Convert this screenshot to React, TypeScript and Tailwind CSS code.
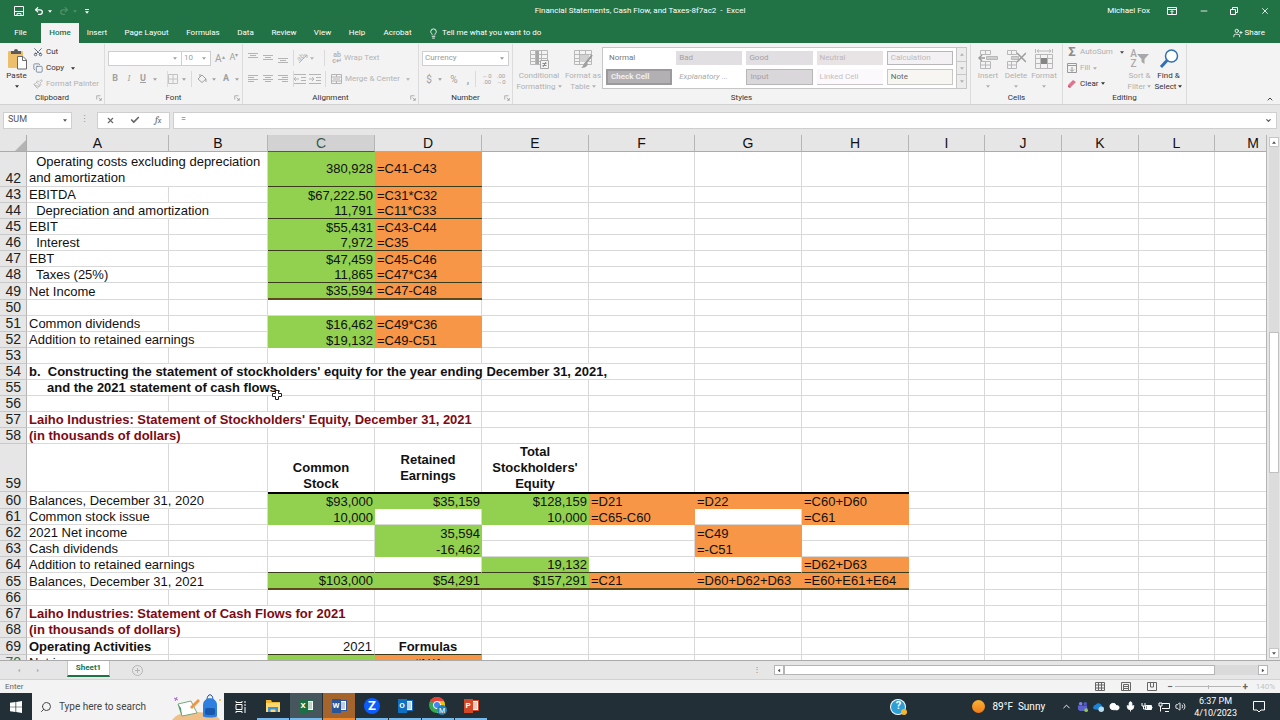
import type { ReactNode } from 'react';
import { ChevronUp, ChevronDown, Minus, X, Lightbulb, Undo2, Redo2, Search, Check, UserPlus, Copy, Paintbrush, Scissors, Volume2, Mic, Cloud } from 'lucide-react';

type Cell = { t: string; fill?: 'g' | 'o'; align?: 'l' | 'c' | 'r'; v?: string; bold?: boolean; edge?: 'line' | 'total' | 'head' | 'none' };
type Row = { n: number; h: string; label?: string; span?: number; style?: string; cells?: Record<string, Cell> };

const columns = [
  { id: 'A', w: 'w-[142px]' },
  { id: 'B', w: 'w-[99px]' },
  { id: 'C', w: 'w-[107px]' },
  { id: 'D', w: 'w-[107px]' },
  { id: 'E', w: 'w-[107px]' },
  { id: 'F', w: 'w-[106px]' },
  { id: 'G', w: 'w-[107px]' },
  { id: 'H', w: 'w-[107px]' },
  { id: 'I', w: 'w-[76px]' },
  { id: 'J', w: 'w-[77px]' },
  { id: 'K', w: 'w-[77px]' },
  { id: 'L', w: 'w-[76px]' },
  { id: 'M', w: 'w-[77px]' },
];

const num = (t: string, edge?: Cell['edge']): Cell => ({ t, fill: 'g', align: 'r', edge });
const fx = (t: string, edge?: Cell['edge']): Cell => ({ t, fill: 'o', edge });
const blank = (edge: Cell['edge']): Cell => ({ t: '', edge });
const head = (t: string, v = 'align-bottom'): Cell => ({ t, align: 'c', bold: true, v, edge: 'none' });

const RED = 'font-bold text-[#7d0a12]';

const rows: Row[] = [
  { n: 42, h: 'h-[35px] leading-4', label: '  Operating costs excluding depreciation\nand amortization', span: 2, cells: { C: num('380,928', 'line'), D: fx('=C41-C43', 'line') } },
  { n: 43, h: 'h-4', label: 'EBITDA', cells: { C: num('$67,222.50'), D: fx('=C31*C32') } },
  { n: 44, h: 'h-4', label: '  Depreciation and amortization', span: 2, cells: { C: num('11,791', 'line'), D: fx('=C11*C33', 'line') } },
  { n: 45, h: 'h-4', label: 'EBIT', cells: { C: num('$55,431'), D: fx('=C43-C44') } },
  { n: 46, h: 'h-4', label: '  Interest', cells: { C: num('7,972', 'line'), D: fx('=C35', 'line') } },
  { n: 47, h: 'h-4', label: 'EBT', cells: { C: num('$47,459'), D: fx('=C45-C46') } },
  { n: 48, h: 'h-4', label: '  Taxes (25%)', cells: { C: num('11,865', 'line'), D: fx('=C47*C34', 'line') } },
  { n: 49, h: 'h-[17px]', label: 'Net Income', cells: { C: num('$35,594', 'total'), D: fx('=C47-C48', 'total') } },
  { n: 50, h: 'h-4' },
  { n: 51, h: 'h-4', label: 'Common dividends', cells: { C: num('$16,462'), D: fx('=C49*C36') } },
  { n: 52, h: 'h-4', label: 'Addition to retained earnings', span: 2, cells: { C: num('$19,132'), D: fx('=C49-C51') } },
  { n: 53, h: 'h-4' },
  { n: 54, h: 'h-4', label: "b.  Constructing the statement of stockholders' equity for the year ending December 31, 2021,", span: 6, style: 'font-bold' },
  { n: 55, h: 'h-4', label: '     and the 2021 statement of cash flows.', span: 3, style: 'font-bold' },
  { n: 56, h: 'h-4' },
  { n: 57, h: 'h-4', label: "Laiho Industries: Statement of Stockholders' Equity, December 31, 2021", span: 4, style: RED },
  { n: 58, h: 'h-4', label: '(in thousands of dollars)', span: 2, style: RED },
  { n: 59, h: 'h-12 leading-4', cells: { C: head('Common\nStock'), D: head('Retained\nEarnings', 'align-middle'), E: head("Total\nStockholders'\nEquity"), F: blank('none'), G: blank('none'), H: blank('none') } },
  { n: 60, h: 'h-[17px]', label: 'Balances, December 31, 2020', span: 2, cells: { C: num('$93,000', 'head'), D: num('$35,159', 'head'), E: num('$128,159', 'head'), F: fx('=D21', 'head'), G: fx('=D22', 'head'), H: fx('=C60+D60', 'head') } },
  { n: 61, h: 'h-4', label: 'Common stock issue', cells: { C: num('10,000'), E: num('10,000'), F: fx('=C65-C60'), H: fx('=C61') } },
  { n: 62, h: 'h-4', label: '2021 Net income', cells: { D: num('35,594'), G: fx('=C49') } },
  { n: 63, h: 'h-4', label: 'Cash dividends', cells: { D: num('-16,462'), G: fx('=-C51') } },
  { n: 64, h: 'h-4', label: 'Addition to retained earnings', span: 2, cells: { C: blank('line'), D: blank('line'), E: num('19,132', 'line'), F: blank('line'), G: blank('line'), H: fx('=D62+D63', 'line') } },
  { n: 65, h: 'h-[17px]', label: 'Balances, December 31, 2021', span: 2, cells: { C: num('$103,000', 'total'), D: num('$54,291', 'total'), E: num('$157,291', 'total'), F: fx('=C21', 'total'), G: fx('=D60+D62+D63', 'total'), H: fx('=E60+E61+E64', 'total') } },
  { n: 66, h: 'h-4' },
  { n: 67, h: 'h-4', label: 'Laiho Industries: Statement of Cash Flows for 2021', span: 3, style: RED },
  { n: 68, h: 'h-4', label: '(in thousands of dollars)', span: 2, style: RED },
  { n: 69, h: 'h-[17px]', label: 'Operating Activities', style: 'font-bold', cells: { C: { t: '2021', align: 'r', edge: 'line' }, D: { t: 'Formulas', align: 'c', bold: true, edge: 'line' } } },
  { n: 70, h: 'h-4', label: 'Net income', cells: { C: num(''), D: { t: '#N/A', fill: 'o', align: 'c' } } },
];

function cellClass(c?: Cell) {
  const fill = c?.fill === 'g' ? 'bg-[#92d050]' : c?.fill === 'o' ? 'bg-[#f79646]' : 'border-r border-r-[#d9d9d9]';
  const align = c?.align === 'r' ? 'text-right' : c?.align === 'c' ? 'text-center' : 'text-left';
  let edge = c?.fill ? '' : 'border-b border-b-[#d9d9d9]';
  if (c?.edge === 'none') edge = '';
  if (c?.edge === 'line') edge = 'border-b border-b-[#3a3a1c]';
  if (c?.edge === 'total') edge = 'border-b-2 border-b-[#5c4a1c]';
  if (c?.edge === 'head') edge = 'border-t-2 border-t-black';
  return `${fill} ${align} ${edge} ${c?.bold ? 'font-bold' : ''} ${c?.v ?? 'align-middle'} px-[2px] whitespace-pre`;
}

function SheetRow({ row }: { row: Row }) {
  const span = row.span ?? 1;
  return (
    <tr className={row.h}>
      <th scope="row" className={`border-r border-b border-r-[#b5b5b5] border-b-[#c9c9c9] bg-[#e6e6e6] pr-[5px] text-right align-bottom text-sm leading-[15px] font-normal ${row.n === 70 ? 'text-[#217346]' : 'text-[#222]'}`}>
        {row.n}
      </th>
      <td colSpan={span} className={`border-r border-b border-[#d9d9d9] pl-[2px] text-left align-bottom whitespace-pre ${row.style ?? ''}`}>
        {row.label}
      </td>
      {columns.slice(span).map(col => (
        <td key={col.id} className={cellClass(row.cells?.[col.id])}>{row.cells?.[col.id]?.t}</td>
      ))}
      <td className="border-b border-[#d9d9d9]" />
    </tr>
  );
}

function Caret({ className = '' }: { className?: string }) {
  return (
    <svg viewBox="0 0 6 4" className={`h-[3px] w-[4px] shrink-0 ${className}`} fill="currentColor">
      <path d="M0 0h6L3 4z" />
    </svg>
  );
}

function Group({ label, width, launcher, children }: { label: string; width: string; launcher?: boolean; children: ReactNode }) {
  return (
    <section className={`flex shrink-0 flex-col border-r border-[#dcdcdc] ${width}`}>
      <div className="flex min-h-0 flex-1 items-start">{children}</div>
      <div className="relative h-3 text-center text-[8px] leading-3 text-[#333]">
        {label}
        {launcher && (
          <button aria-label={`${label} settings`} className="absolute top-[3px] right-[2px] text-[#999]">
            <svg viewBox="0 0 8 8" className="size-[6px]" fill="none" stroke="currentColor">
              <path d="M1 6V1h5M3.500 3.500 7 7M7 4v3H4" />
            </svg>
          </button>
        )}
      </div>
    </section>
  );
}

function Divider() {
  return <span className="h-4 w-px bg-[#dadada]" />;
}

// Horizontal strokes for the six alignment buttons
function LinesIcon({ lines }: { lines: [number, number, number][] }) {
  return (
    <svg viewBox="0 0 10 10" className="size-[10px]" stroke="currentColor">
      {lines.map(([x1, x2, y]) => (
        <path key={y} d={`M${x1} ${y}H${x2}`} />
      ))}
    </svg>
  );
}

const verticalAligns: { name: string; lines: [number, number, number][] }[] = [
  { name: 'Top align', lines: [[0, 10, 0.5], [2, 8, 2.5], [0, 10, 4.5]] },
  { name: 'Middle align', lines: [[0, 10, 2.5], [2, 8, 4.5], [0, 10, 6.5]] },
  { name: 'Bottom align', lines: [[0, 10, 5.5], [2, 8, 7.5], [0, 10, 9.5]] },
];
const textAligns: { name: string; lines: [number, number, number][] }[] = [
  { name: 'Align left', lines: [[0, 10, 1.5], [0, 6, 3.5], [0, 10, 5.5], [0, 6, 7.5]] },
  { name: 'Center', lines: [[0, 10, 1.5], [2, 8, 3.5], [0, 10, 5.5], [2, 8, 7.5]] },
  { name: 'Align right', lines: [[0, 10, 1.5], [4, 10, 3.5], [0, 10, 5.5], [4, 10, 7.5]] },
];

function IndentIcon({ flip }: { flip?: boolean }) {
  return (
    <svg viewBox="0 0 12 10" className="h-[10px] w-3" fill="none" stroke="currentColor">
      <path d="M0 .5h12M7 3.500h5M7 6.500h5M0 9.500h12" />
      <path d={flip ? 'M0 5h5M3 3l2 2-2 2' : 'M0 5h5M2 3 0 5l2 2'} />
    </svg>
  );
}

function PasteIcon() {
  return (
    <svg viewBox="0 0 20 22" className="h-[22px] w-5">
      <rect x="1" y="3" width="15" height="17" rx="1" fill="#edbf6d" />
      <path d="M4 6V3h3a2 2 0 0 1 4 0h3v3z" fill="#5b5b5b" />
      <path d="M10.500 8.500h5.500l3.500 3.500v9h-9z" fill="#fff" stroke="#6b6b6b" />
      <path d="M15.500 8.500v4h4" fill="none" stroke="#6b6b6b" />
    </svg>
  );
}

function GridGlyph({ mark }: { mark: 'cond' | 'table' | 'insert' | 'delete' | 'format' }) {
  return (
    <svg viewBox="0 0 20 20" className="size-5" fill="none" stroke="#b8b8b8">
      {(mark === 'cond' || mark === 'table') && <path d="M1.500 1.500h17v14h-17zM1.500 5.500h17M1.500 9.500h17M1.500 12.500h17M6.500 1.500v14M12.500 1.500v14" />}
      {mark === 'cond' && (
        <>
          <path d="M7 2h3v13H7z" fill="#a8a8a8" stroke="none" />
          <path d="M11.500 11.500h8v8h-8z" fill="#f3f3f3" stroke="#a5a5a5" />
          <path d="M13.500 14.500h4M13.500 16.500h4M17 13l-3 5" stroke="#8a8a8a" />
        </>
      )}
      {mark === 'table' && (
        <>
          <path d="M7 6h9v7H7z" fill="#d0d0d0" stroke="none" />
          <path d="M19 6l-6 8" stroke="#9a9a9a" strokeWidth="2" />
          <path d="M13 13l2 2c-1 3-4 4-7 4 3-2 2-5 5-6z" fill="#a0a0a0" stroke="none" />
        </>
      )}
      {mark === 'insert' && (
        <>
          <path d="M2.500 1.500h10v4h-10zM7.500 1.500v4M2.500 12.500h10v7h-10zM2.500 16h10M7.500 12.500v7" />
          <path d="M8.500 7.500h11v3h-11z" fill="#cfcfcf" />
          <path d="M1 9h6M4 6 1 9l3 3" stroke="#9c9c9c" strokeWidth="1.500" />
        </>
      )}
      {mark === 'delete' && (
        <>
          <path d="M1.500 1.500h9v4h-9zM5.500 1.500v4M1.500 12.500h9v7h-9zM1.500 16h9M5.500 12.500v7" />
          <path d="M5.500 7.500h7v3h-7z" fill="#cfcfcf" />
          <path d="M11 4l9 9M20 4l-9 9" stroke="#9c9c9c" strokeWidth="1.500" />
        </>
      )}
      {mark === 'format' && (
        <>
          <path d="M1.500 5.500h17v14h-17zM1.500 9.500h17M1.500 14.500h17M6.500 5.500v14M13.500 5.500v14M1.500 0v4M18.500 0v4M3 2h14M5 .5 3 2l2 1.500M15 .5l2 1.500-2 1.500" />
          <path d="M7 9h6v6H7z" fill="#858585" stroke="none" />
        </>
      )}
    </svg>
  );
}

function TallButton({ icon, lines, width, active, caretBelow }: { icon: ReactNode; lines: string[]; width: string; active?: boolean; caretBelow?: boolean }) {
  return (
    <button className={`flex shrink-0 flex-col items-center pt-1 text-[8px] leading-[11px] ${width} ${active ? 'text-[#333]' : 'text-[#b1b1b1]'}`}>
      <span className="flex h-[22px] items-center justify-center">{icon}</span>
      {lines.map((line, i) => (
        <span key={line} className="flex items-center gap-[2px] whitespace-nowrap">
          {line}
          {!caretBelow && i === lines.length - 1 && <Caret />}
        </span>
      ))}
      {caretBelow && <Caret className="mt-1" />}
    </button>
  );
}

const cellStyles = [
  { name: 'Normal', look: 'bg-white text-[#777]' },
  { name: 'Bad', look: 'bg-[#e2dfe2] text-[#a5a0a5]' },
  { name: 'Good', look: 'bg-[#e2dfe2] text-[#a5a0a5]' },
  { name: 'Neutral', look: 'bg-[#e8e4e6] text-[#bdb6ba]' },
  { name: 'Calculation', look: 'border border-[#b9b6b9] bg-[#f3f1f3] text-[#bdb9bd]' },
  { name: 'Check Cell', look: 'border-2 border-[#9c999c] bg-[#b3b0b3] font-bold text-[#efefef]' },
  { name: 'Explanatory ...', look: 'bg-white text-[#aaa] italic' },
  { name: 'Input', look: 'border border-[#b9b6b9] bg-[#dad7da] text-[#a5a0a5]' },
  { name: 'Linked Cell', look: 'border-b border-[#c9c5c9] bg-[#fbf9fb] text-[#c4c0c4]' },
  { name: 'Note', look: 'border border-[#c9c7c4] bg-[#f8f6f3] text-[#666]' },
];

const menuTabs = [
  { name: 'Insert', w: 'w-9' },
  { name: 'Page Layout', w: 'w-[63px]' },
  { name: 'Formulas', w: 'w-[50px]' },
  { name: 'Data', w: 'w-[35px]' },
  { name: 'Review', w: 'w-[42px]' },
  { name: 'View', w: 'w-[35px]' },
  { name: 'Help', w: 'w-[34px]' },
  { name: 'Acrobat', w: 'w-[47px]' },
];

function TitleBar() {
  return (
    <header className="bg-[#217346] text-[8px] text-white">
      <div className="grid h-[22px] grid-cols-[1fr_auto_1fr] items-center">
        <div className="flex items-center pl-[14px]">
          <button aria-label="Save">
            <svg viewBox="0 0 10 10" className="size-[10px]" fill="none" stroke="currentColor">
              <path d="M.5.5h9v9h-9zM.5 5.500h9M3 9.500v-2h4v2" />
            </svg>
          </button>
          <button aria-label="Undo" className="ml-[10px]"><Undo2 className="size-[10px]" strokeWidth={3} /></button>
          <Caret className="ml-1" />
          <button aria-label="Redo" className="ml-[7px] text-[#4f9169]"><Redo2 className="size-[10px]" strokeWidth={3} /></button>
          <Caret className="ml-1 text-[#4f9169]" />
          <button aria-label="Customize toolbar" className="ml-2 flex flex-col items-center gap-px">
            <span className="h-px w-1 bg-white" />
            <Caret />
          </button>
        </div>
        <h1>Financial Statements, Cash Flow, and Taxes-8f7ac2 &nbsp;- &nbsp;Excel</h1>
        <div className="flex items-center justify-end pr-[10px]">
          <span className="mr-[17px]">Michael Fox</span>
          <button aria-label="Ribbon display options">
            <svg viewBox="0 0 10 8" className="mr-[22px] h-2 w-[10px]" fill="none" stroke="currentColor">
              <path d="M.5.5h9v7h-9zM.5 2.500h9M5 7V4M3.500 5 5 3.500 6.500 5" />
            </svg>
          </button>
          <button aria-label="Minimize"><Minus className="mr-[21px] size-[10px]" /></button>
          <button aria-label="Restore">
            <svg viewBox="0 0 8 8" className="mr-[22px] size-2" fill="none" stroke="currentColor">
              <path d="M.5 2.500h5v5h-5zM2.500 2.500v-2h5v5h-2" />
            </svg>
          </button>
          <button aria-label="Close"><X className="size-[10px]" /></button>
        </div>
      </div>
      <nav className="flex h-[21px] items-stretch pt-px">
        <button className="w-[41px]">File</button>
        <button className="w-[38px] bg-[#f3f3f3] font-medium text-[#217346]">Home</button>
        {menuTabs.map(tab => (
          <button key={tab.name} className={`whitespace-nowrap ${tab.w}`}>{tab.name}</button>
        ))}
        <label className="ml-[7px] flex items-center gap-[3px]">
          <Lightbulb className="size-[11px]" />
          <input readOnly value="Tell me what you want to do" className="w-[130px] outline-none" />
        </label>
        <button className="mr-[15px] ml-auto flex items-center gap-[2px]"><UserPlus className="size-[10px]" />Share</button>
      </nav>
    </header>
  );
}

function Ribbon() {
  return (
    <div className="flex h-[62px] shrink-0 border-b border-[#d2d2d2] bg-[#f3f3f3] pt-px text-[8px] text-[#b1b1b1]">
      <Group label="Clipboard" width="w-[105px]" launcher>
        <TallButton icon={<PasteIcon />} lines={['Paste']} width="w-[33px]" active caretBelow />
        <div className="flex flex-col text-[#333]">
          <button className="flex h-4 items-center gap-[3px]"><Scissors className="size-[10px] -rotate-90 text-[#44546a]" />Cut</button>
          <button className="flex h-4 items-center gap-[3px]"><Copy className="size-[10px] text-[#6b7f96]" />Copy <Caret className="ml-1" /></button>
          <button className="flex h-[15px] items-center gap-[3px] whitespace-nowrap text-[#b1b1b1]"><Paintbrush className="size-[10px]" />Format Painter</button>
        </div>
      </Group>
      <Group label="Font" width="w-[138px]" launcher>
        <div className="flex flex-col pl-[3px]">
          <div className="flex h-[28px] items-center text-[#a0a0a0]">
            <label className="flex h-[15px] w-[74px] items-center border border-[#cfcfcf] bg-white pr-1">
              <select aria-label="Font name" className="w-full appearance-none outline-none"><option></option></select>
              <Caret />
            </label>
            <label className="flex h-[15px] w-[29px] items-center border border-l-0 border-[#cfcfcf] bg-white pr-1 pl-[2px]">
              <select aria-label="Font size" className="w-full appearance-none outline-none"><option>10</option></select>
              <Caret />
            </label>
            <button className="ml-1 text-[10px]">A<sup className="text-[6px]">▴</sup></button>
            <button className="ml-[5px] text-[9px]">A<sup className="text-[6px]">▾</sup></button>
          </div>
          <div className="flex h-[14px] items-center text-[9px] text-[#a0a0a0]">
            <button className="w-[14px] font-bold">B</button>
            <button className="w-[14px] font-serif italic">I</button>
            <button className="w-[14px] font-bold underline">U</button>
            <Caret className="mr-[10px] ml-[3px]" />
            <Divider />
            <svg viewBox="0 0 10 10" className="mr-1 size-[10px]" fill="none" stroke="#c2c2c2"><path d="M.5.5h9v9h-9zM5 0v10M0 5h10" /></svg>
            <Caret className="mr-[5px]" />
            <Divider />
            <svg viewBox="0 0 10 10" className="mr-[5px] ml-[5px] size-[10px]" fill="none" stroke="currentColor"><path d="M1 5l4-4 4 4-4 3.500zM3 3V0M9 5v3" /></svg>
            <Caret className="mr-[7px]" />
            <button className="mr-[6px] font-bold">A</button>
            <Caret />
          </div>
        </div>
      </Group>
      <Group label="Alignment" width="w-[176px]" launcher>
        <div className="flex w-full flex-col pl-[5px] text-[#b4b4b4]">
          <div className="flex h-[28px] items-center">
            <div className="flex gap-[5px]">
              {verticalAligns.map(a => <button key={a.name} aria-label={a.name}><LinesIcon lines={a.lines} /></button>)}
            </div>
            <span className="w-[5px]" /><Divider />
            <button aria-label="Orientation" className="ml-[2px]">
              <svg viewBox="0 0 12 12" className="size-3 overflow-visible" fill="none" stroke="currentColor">
                <path d="M3 11 11 3M8 3h3v3" />
                <text x="1" y="8" fontSize="7" fill="currentColor" stroke="none" transform="rotate(-40 4 6)">ab</text>
              </svg>
            </button>
            <Caret className="mr-[10px] ml-[2px]" /><Divider />
            <button className="ml-[7px] flex items-center gap-[2px]">
              <span className="w-[10px] text-[7px] leading-[6px] font-bold">ab c↵</span>Wrap Text
            </button>
          </div>
          <div className="flex h-[14px] items-center">
            <div className="flex gap-[5px]">
              {textAligns.map(a => <button key={a.name} aria-label={a.name}><LinesIcon lines={a.lines} /></button>)}
            </div>
            <span className="w-[5px]" /><Divider />
            <button aria-label="Decrease indent"><IndentIcon /></button>
            <button aria-label="Increase indent" className="mr-1 ml-[3px]"><IndentIcon flip /></button>
            <Divider />
            <button className="ml-[5px] flex items-center gap-[3px] whitespace-nowrap">
              <svg viewBox="0 0 11 10" className="h-[10px] w-[11px]" fill="none" stroke="currentColor"><path d="M.5.5h10v9H.5zM.5 3h10M.5 7h10M5.500 0v3M5.500 7v3M2 5h7" /></svg>
              Merge &amp; Center
            </button>
            <Caret className="ml-[6px]" />
          </div>
        </div>
      </Group>
      <Group label="Number" width="w-[94px]" launcher>
        <div className="flex w-full flex-col pl-[3px]">
          <div className="flex h-[28px] items-center">
            <label className="flex h-[15px] w-[87px] items-center border border-[#cfcfcf] bg-white pr-1 pl-[2px] text-[#999]">
              <select aria-label="Number format" className="w-full appearance-none outline-none"><option>Currency</option></select>
              <Caret />
            </label>
          </div>
          <div className="flex h-[14px] items-center text-[10px] text-[#a0a0a0]">
            <button className="w-[14px]">$</button>
            <Caret className="mr-[5px] ml-[2px]" />
            <button className="w-[14px]">%</button>
            <button className="w-[14px] font-bold">,</button>
            <Divider />
            <button className="ml-1 w-[14px] text-[6px] leading-[6px]">←0 .00</button>
            <button className="w-[14px] text-[6px] leading-[6px]">.00 →0</button>
          </div>
        </div>
      </Group>
      <Group label="Styles" width="w-[458px]">
        <TallButton icon={<GridGlyph mark="cond" />} lines={['Conditional', 'Formatting']} width="w-[52px]" />
        <TallButton icon={<GridGlyph mark="table" />} lines={['Format as', 'Table']} width="w-[36px]" />
        <div className="mt-[3px] ml-px flex h-[42px] w-[365px] border border-[#c6c6c6] bg-white">
          <div className="grid flex-1 grid-cols-5 gap-x-1 gap-y-1 p-[3px]">
            {cellStyles.map(s => (
              <button key={s.name} className={`flex items-center overflow-hidden px-[3px] text-left whitespace-nowrap ${s.look}`}>{s.name}</button>
            ))}
          </div>
          <div className="flex w-[10px] flex-col divide-y divide-[#c6c6c6] border-l border-[#c6c6c6] bg-[#ececec]">
            <button aria-label="Previous styles" className="flex flex-1 items-center justify-center"><Caret className="rotate-180" /></button>
            <button aria-label="Next styles" className="flex flex-1 items-center justify-center"><Caret /></button>
            <button aria-label="More styles" className="flex flex-1 items-center justify-center"><Caret /></button>
          </div>
        </div>
      </Group>
      <Group label="Cells" width="w-[92px]">
        <span className="w-[3px]" />
        <TallButton icon={<GridGlyph mark="insert" />} lines={['Insert']} width="w-7" caretBelow />
        <TallButton icon={<GridGlyph mark="delete" />} lines={['Delete']} width="w-7" caretBelow />
        <TallButton icon={<GridGlyph mark="format" />} lines={['Format']} width="w-7" caretBelow />
      </Group>
      <Group label="Editing" width="w-[124px]">
        <div className="flex w-[62px] flex-col pl-1">
          <button className="flex h-4 items-center gap-[3px]"><span className="w-[10px] text-[13px] leading-3 font-bold text-[#8c8c8c]">Σ</span>AutoSum <Caret className="ml-1 text-[#444]" /></button>
          <button className="flex h-4 items-center gap-[3px]">
            <svg viewBox="0 0 10 10" className="size-[10px]" fill="none" stroke="#9a9a9a"><path d="M.5.5h9v9h-9zM.5 2.500h9M5 4v4M3 6.500l2 2 2-2" /></svg>
            Fill <Caret />
          </button>
          <button className="flex h-[15px] items-center gap-[3px] text-[#333]">
            <svg viewBox="0 0 10 10" className="size-[10px]"><path d="M1 6 6 1l3 2-5 5z" fill="#e0748c" /><path d="M1 6l3 2-1 1-2-1z" fill="#c14f6b" /></svg>
            Clear <Caret />
          </button>
        </div>
        <TallButton
          icon={
            <span className="flex items-center text-[#a8a8a8]">
              <span className="flex flex-col text-[10px] leading-[10px] font-medium"><span>A</span><span>Z</span></span>
              <svg viewBox="0 0 12 11" className="h-[11px] w-3" fill="currentColor"><path d="M0 0h12L7.500 5v5L4.500 8V5z" /></svg>
            </span>
          }
          lines={['Sort &', 'Filter']}
          width="w-[29px]"
        />
        <TallButton
          icon={
            <svg viewBox="0 0 20 20" className="size-5" fill="none" stroke="#2f6fb3">
              <circle cx="12.500" cy="7" r="6" strokeWidth="1.500" fill="#fff" />
              <path d="M8 11.500 2 18" strokeWidth="3" />
            </svg>
          }
          lines={['Find &', 'Select']}
          width="w-[29px]"
          active
        />
      </Group>
      <button aria-label="Collapse the ribbon" className="mt-auto mr-[6px] mb-px ml-auto text-[#444]"><ChevronUp className="size-2" strokeWidth={3} /></button>
    </div>
  );
}

function FormulaBar() {
  return (
    <div className="flex h-[30px] shrink-0 items-center bg-[#e6e6e6] px-[3px] text-[9px] text-[#555]">
      <label className="flex h-[17px] w-[69px] items-center border border-[#cfcfcf] bg-white pr-1 pl-1">
        <input aria-label="Name box" readOnly value="SUM" className="w-full outline-none" />
        <Caret />
      </label>
      <span className="mx-[8px] text-[#999]">⋮</span>
      <div className="flex h-[17px] w-[73px] items-center justify-around border border-[#cfcfcf] bg-white text-[#666]">
        <button aria-label="Cancel"><X className="size-[9px]" strokeWidth={3} /></button>
        <button aria-label="Enter"><Check className="size-[10px]" strokeWidth={4} /></button>
        <button className="font-serif text-[10px] leading-none italic">f<span className="text-[8px]">x</span></button>
      </div>
      <label className="ml-[3px] flex h-[17px] flex-1 items-center border border-[#cfcfcf] bg-white pr-1 pl-[7px]">
        <input aria-label="Formula" readOnly value="=" className="w-full outline-none" />
        <ChevronDown className="size-[7px]" strokeWidth={4} />
      </label>
    </div>
  );
}

function Sheet() {
  return (
    <div className="flex min-h-0 flex-1 bg-[#e6e6e6]">
      <main className="relative min-w-0 flex-1 overflow-hidden border-r border-[#b5b5b5] bg-white">
        <table className="w-full table-fixed border-separate border-spacing-0 font-['Liberation_Sans',Arial,sans-serif] text-[13px] leading-[15px] text-[#111]">
          <colgroup>
            <col className="w-[27px]" />
            {columns.map(col => <col key={col.id} className={col.w} />)}
            <col />
          </colgroup>
          <thead>
            <tr className="h-[17px] text-sm leading-4">
              <td className="border-r border-b border-[#ababab] bg-[#e6e6e6] align-bottom">
                <svg viewBox="0 0 11 11" className="ml-auto size-[11px]"><path d="M11 0v11H0z" fill="#b4b4b4" /></svg>
              </td>
              {columns.map(col => (
                <th key={col.id} scope="col" className={`border-r border-b border-r-[#b5b5b5] font-normal ${col.id === 'C' ? 'border-b-[#217346] bg-[#d2d2d2] text-[#3c5a48]' : 'border-b-[#ababab] bg-[#e6e6e6]'}`}>
                  {col.id}
                </th>
              ))}
              <td className="border-b border-[#ababab] bg-[#e6e6e6]" />
            </tr>
          </thead>
          <tbody>
            {rows.map(row => <SheetRow key={row.n} row={row} />)}
          </tbody>
        </table>
        {/* Mouse pointer */}
        <svg viewBox="0 0 10 10" className="absolute top-[255px] left-[272px] size-[10px]" fill="#fff" stroke="#222">
          <path d="M3.500.5h3v3h3v3h-3v3h-3v-3h-3v-3h3z" />
        </svg>
      </main>
      <div className="flex w-[13px] flex-col items-center py-[2px] text-[#555]">
        <button aria-label="Scroll up" className="flex size-[10px] items-center justify-center border border-[#c6c6c6] bg-white"><Caret className="rotate-180" /></button>
        <div className="flex w-[10px] flex-1 flex-col bg-[#dcdcdc]">
          <div className="h-[37%]" />
          <div className="h-[28%] border border-[#c0c0c0] bg-white" />
        </div>
        <button aria-label="Scroll down" className="flex size-[10px] items-center justify-center border border-[#c6c6c6] bg-white"><Caret /></button>
      </div>
    </div>
  );
}

function SheetTabs() {
  return (
    <div className="flex h-[19px] shrink-0 items-center border-t border-[#ababab] bg-[#e6e6e6] text-[8px] text-[#b5b5b5]">
      <button aria-label="Previous sheet" className="ml-[17px]"><Caret className="rotate-90" /></button>
      <button aria-label="Next sheet" className="ml-[15px]"><Caret className="-rotate-90" /></button>
      <button className="ml-[27px] h-4 w-[43px] self-start border-x border-b-2 border-x-[#c6c6c6] border-b-[#217346] bg-white font-bold text-[#217346]">Sheet1</button>
      <button aria-label="New sheet" className="ml-[22px]">
        <svg viewBox="0 0 11 11" className="size-[11px]" fill="none" stroke="currentColor"><circle cx="5.500" cy="5.500" r="5" /><path d="M5.500 3v5M3 5.500h5" /></svg>
      </button>
      <span className="mr-[13px] ml-auto text-[#888]">⋮</span>
      <button aria-label="Scroll left" className="flex size-[10px] items-center justify-center border border-[#b5b5b5] bg-white text-[#555]"><Caret className="rotate-90" /></button>
      <div className="flex h-[10px] w-[37%] bg-[#dadada]">
        <div className="h-full w-[91%] border border-[#b5b5b5] bg-white" />
      </div>
      <button aria-label="Scroll right" className="mr-3 flex size-[10px] items-center justify-center border border-[#b5b5b5] bg-white text-[#555]"><Caret className="-rotate-90" /></button>
    </div>
  );
}

function StatusBar() {
  return (
    <footer className="flex h-[14px] shrink-0 items-center border-t border-[#d2d2d2] bg-[#f3f3f3] pr-[5px] pl-[5px] text-[8px] text-[#666]">
      <span>Enter</span>
      <button aria-label="Normal view" className="ml-auto">
        <svg viewBox="0 0 10 9" className="h-[9px] w-[10px]" fill="none" stroke="currentColor"><path d="M.5.5h9v8h-9zM.5 3h9M.5 6h9M3.500 0v9M6.500 0v9" /></svg>
      </button>
      <button aria-label="Page layout view" className="ml-4">
        <svg viewBox="0 0 10 9" className="h-[9px] w-[10px]" fill="none" stroke="currentColor"><path d="M.5.5h9v8h-9zM2.500 2.500h5v6h-5zM3 4.500h4M3 6.500h4" /></svg>
      </button>
      <button aria-label="Page break preview" className="ml-4">
        <svg viewBox="0 0 10 9" className="h-[9px] w-[10px]" fill="none" stroke="currentColor"><path d="M.5.5h9v8h-9zM3.500 0v5h3V0" /></svg>
      </button>
      <button className="ml-[10px] w-[7px] text-center text-[10px] leading-none font-bold">−</button>
      <label className="relative mx-px flex h-2 w-[66px] items-center">
        <span className="h-px w-full bg-[#b5b5b5]" />
        <span className="absolute left-[33px] h-1 w-px bg-[#b5b5b5]" />
        <input type="range" aria-label="Zoom" className="absolute inset-0 w-full opacity-0" />
      </label>
      <button className="w-[7px] text-center text-[10px] leading-none font-bold">+</button>
      <span className="ml-[7px] text-[#c4c4c4]">140%</span>
    </footer>
  );
}

function OfficeIcon({ letter, back }: { letter: string; back: string }) {
  return (
    <span className="flex h-[14px] w-[15px] items-center">
      <span className={`flex h-[14px] w-[9px] items-center justify-center text-[8px] font-bold text-white ${back}`}>{letter}</span>
      <span className={`flex h-[11px] w-[6px] items-center justify-center ${back}`}>
        <span className="h-[9px] w-[5px] border-y border-r border-white bg-white/70" />
      </span>
    </span>
  );
}

const apps: { name: string; tile: string; icon: ReactNode }[] = [
  {
    name: 'File Explorer',
    tile: 'border-[#76b9ed]',
    icon: (
      <svg viewBox="0 0 16 14" className="h-[14px] w-4">
        <path d="M1 1h5l1 2h8v10H1z" fill="#f2b632" />
        <path d="M1 4h14v9H1z" fill="#ffd970" />
        <path d="M3 8h10v5h-2.500v-2.500h-5V13H3z" fill="#3d93d6" />
      </svg>
    ),
  },
  { name: 'Excel', tile: 'border-[#76b9ed] bg-[#47555c]', icon: <OfficeIcon letter="X" back="bg-[#1d7044]" /> },
  { name: 'Word', tile: 'border-[#f08a2c] bg-[#a5642c]', icon: <OfficeIcon letter="W" back="bg-[#2a5699]" /> },
  { name: 'Zoom', tile: 'border-[#76b9ed]', icon: <span className="flex size-4 items-center justify-center rounded-full bg-[#0b5cff] text-[13px] leading-none font-bold text-white">Z</span> },
  { name: 'Outlook', tile: 'border-[#76b9ed]', icon: <OfficeIcon letter="O" back="bg-[#0f6fc0]" /> },
  {
    name: 'Chrome',
    tile: 'border-[#76b9ed]',
    icon: (
      <svg viewBox="0 0 18 18" className="size-[18px]">
        <circle cx="8" cy="8" r="8" fill="#34a853" />
        <path d="M1.100 4A8 8 0 0 1 14.900 4L8 8z" fill="#ea4335" />
        <path d="M14.900 4A8 8 0 0 1 8 16l0-8 0-4z" fill="#fbbc05" />
        <circle cx="8" cy="8" r="3.600" fill="#4285f4" stroke="#fff" />
        <circle cx="13" cy="13" r="5" fill="#1a86b8" />
        <text x="13" y="15.500" fontSize="7" textAnchor="middle" fill="#fff">M</text>
      </svg>
    ),
  },
  { name: 'PowerPoint', tile: 'border-[#76b9ed]', icon: <OfficeIcon letter="P" back="bg-[#d24726]" /> },
];

function Taskbar() {
  return (
    <footer className="flex h-[27px] shrink-0 items-center bg-[#222f36] text-[9px] text-white">
      <button aria-label="Start" className="flex w-8 justify-center">
        <svg viewBox="0 0 12 12" className="size-3" fill="#fff"><path d="M0 1.700 5.500 1v4.700H0zM6.200.9 12 0v5.700H6.200zM0 6.300h5.500V11L0 10.300zM6.200 6.300H12V12l-5.800-.9z" /></svg>
      </button>
      <label className="flex h-full w-48 items-center bg-[#f3f3f3] pl-2 text-[#444]">
        <Search className="size-[12px] -scale-x-100" />
        <input readOnly value="Type here to search" className="ml-[7px] w-[110px] text-[10px] outline-none" />
        <svg viewBox="0 0 54 27" className="ml-auto h-[27px] w-[54px]">
          <path d="M2 27c4-6 12-8 24-8s22 3 24 8z" fill="#efc08a" />
          <path d="M8 11l13-3 6 12-15 3z" fill="#fff" stroke="#74ab83" />
          <path d="M8 11l4 12-1-8z" fill="#4b9a6a" />
          <path d="M20 14l8-8 2 2-8 8z" fill="#f2933d" />
          <path d="M4 5l4 2M7 4 5 8" stroke="#b05fd0" />
          <path d="M37 7c0-7 6-7 6 0" fill="none" stroke="#174f9c" />
          <path d="M33 23V12c0-9 14-9 14 0v11c0 2-14 2-14 0z" fill="#2f7fe0" />
          <rect x="35" y="15" width="10" height="7" rx="2" fill="#1758ad" />
          <circle cx="50" cy="7" r="1" fill="#f5b52e" />
        </svg>
      </label>
      <button aria-label="Task view" className="flex w-[33px] justify-center">
        <svg viewBox="0 0 12 12" className="size-3" fill="none" stroke="#fff"><path d="M1 3.500h6v5H1zM1 0v1.500h6V0M1 12v-1.500h6V12M10 0v2M10 6v6M9 4h2" /></svg>
      </button>
      <div className="flex h-full gap-px">
        {apps.map(app => (
          <button key={app.name} aria-label={app.name} className={`flex h-full w-8 items-center justify-center border-b-2 ${app.tile}`}>{app.icon}</button>
        ))}
      </div>
      <div className="ml-auto flex h-full items-center pr-[15px]">
        <span className="relative mr-[67px] flex size-[14px] items-center justify-center rounded-full bg-[#2b9fd6] text-[11px] font-bold ring-1 ring-white">
          ?
          <span className="absolute -right-[2px] -bottom-px size-[6px] rounded-full bg-[#f5b52e]" />
        </span>
        <span className="mr-[7px] size-[13px] rounded-full bg-linear-to-b from-[#f9b233] to-[#f07c1b]" />
        <span className="mr-4 text-[10px]">89°F &nbsp;Sunny</span>
        <div className="flex items-center gap-[5px]">
          <ChevronUp className="size-[11px]" />
          <svg viewBox="0 0 12 12" className="size-[11px]"><circle cx="4" cy="3" r="2" fill="#7b83eb" /><circle cx="9" cy="3" r="2" fill="#5059c9" /><path d="M1 5h10v4l-3 2H3L1 9z" fill="#5b62d0" /><circle cx="10" cy="10" r="2" fill="#92c353" /></svg>
          <svg viewBox="0 0 12 12" className="size-[11px]"><path d="M1 9a3 3 0 0 1 2-5 4 4 0 0 1 7 2 2 2 0 0 1 0 4z" fill="#1b82d6" /><circle cx="9" cy="9" r="3" fill="#b9dcf5" /></svg>
          <Cloud className="size-[11px] fill-white" />
          <Mic className="size-[11px] fill-white" />
          <svg viewBox="0 0 12 10" className="h-[10px] w-3" fill="none" stroke="#fff"><path d="M4.500 3.500h6v4h-6zM11 5v1M1 1v3h3V1M2.500 4v3h2" /><path d="M6 4h4v3H6z" fill="#fff" /></svg>
          <svg viewBox="0 0 12 10" className="h-[10px] w-3" fill="none" stroke="#fff"><path d="M4 1.500h7.500v5H4M7 9.500h4M1 1h3v3H1zM2.500 4v5.500" /></svg>
          <Volume2 className="size-[11px]" />
        </div>
        <div className="mr-[16px] ml-[8px] text-center text-[9px] leading-3">
          <div>6:37 PM</div>
          <div>4/10/2023</div>
        </div>
        <svg viewBox="0 0 12 12" className="size-3" fill="none" stroke="currentColor"><path d="M.5.5h11v8.500H8L6 11 4 9H.5z" /></svg>
      </div>
    </footer>
  );
}

export default function App() {
  return (
    <div className="flex h-screen flex-col overflow-hidden bg-[#e6e6e6] font-['Roboto','Noto_Sans',sans-serif]">
      <TitleBar />
      <Ribbon />
      <FormulaBar />
      <Sheet />
      <SheetTabs />
      <StatusBar />
      <Taskbar />
    </div>
  );
}
